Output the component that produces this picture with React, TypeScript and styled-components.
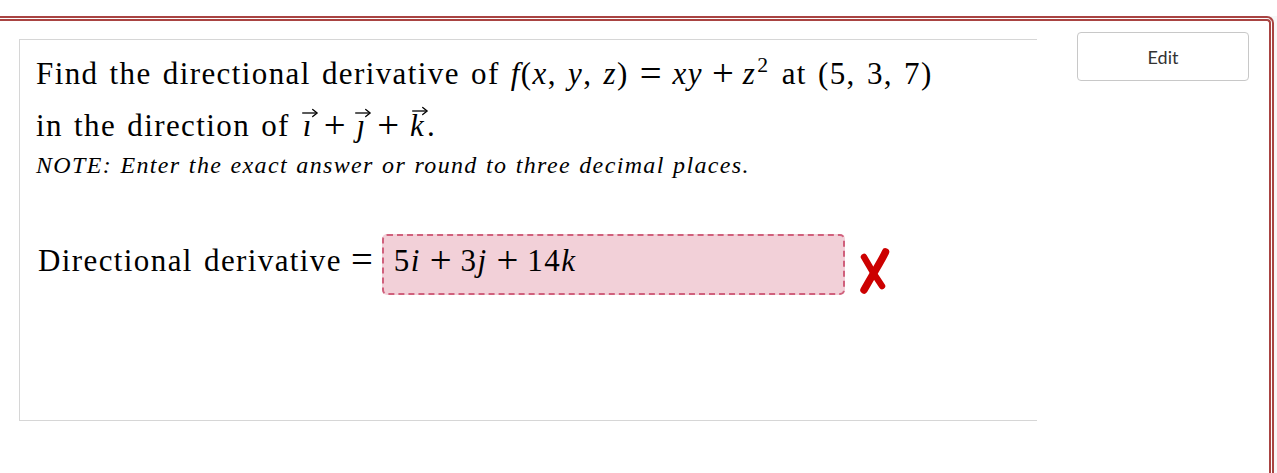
import React from "react";
import styled, { createGlobalStyle } from "styled-components";

const Global = createGlobalStyle`
  html, body { margin: 0; padding: 0; background: #ffffff; }
  body { font-family: "Liberation Serif", "Times New Roman", serif; color: #000; }
`;

const Page = styled.div`
  width: 1277px;
  height: 473px;
  overflow: hidden;
  background: #ffffff;
`;

const Shell = styled.div`
  margin-top: 16px;
  background: #f7f7f7;
`;

const Frame = styled.div`
  box-sizing: border-box;
  width: 1274px;
  min-height: 480px;
  background: #ffffff;
  border-top: 5px double #a94442;
  border-right: 5px double #a94442;
  border-top-right-radius: 7px;
  display: flex;
  align-items: flex-start;
  gap: 40px;
  padding: 11px 20px 0 19px;
`;

const Card = styled.div`
  box-sizing: border-box;
  width: 1018px;
  height: 382px;
  margin-top: 7px;
  border: 1px solid #d6d6d6;
  border-right: none;
  padding: 8px 0 0 16px;
`;

const Question = styled.p`
  margin: 0;
  font-size: 31px;
  line-height: 52px;
  letter-spacing: 1.4px;
  word-spacing: 2px;
  white-space: nowrap;
`;

const Note = styled.p`
  margin: 0;
  font-size: 24px;
  line-height: 26px;
  font-style: italic;
  letter-spacing: 1.35px;
  word-spacing: 1px;
  white-space: nowrap;
`;

const I = styled.span`
  font-style: italic;
`;

const Op = styled.span<{ $gap?: number }>`
  font-size: 1.25em;
  line-height: 0;
  letter-spacing: 0;
  vertical-align: -2px;
  margin: 0 ${(p) => p.$gap ?? 9}px;
`;

const Sup = styled.sup`
  font-size: 0.7em;
  line-height: 0;
  vertical-align: 0.55em;
  margin-left: 1px;
  margin-right: 1px;
`;

const VecBox = styled.span`
  position: relative;
  display: inline-block;
  font-style: italic;
  line-height: 31px;
  padding: 0 0.06em;
`;

const VecArrow = styled.svg<{ $top: number }>`
  position: absolute;
  left: 50%;
  top: ${(p) => p.$top}px;
  transform: translateX(-40%);
  width: 17px;
  height: 10px;
  overflow: visible;
`;

const Vec: React.FC<{ ch: string; top?: number }> = ({ ch, top = -3 }) => (
  <VecBox>
    {ch}
    <VecArrow $top={top} viewBox="0 0 17 10">
      <path d="M1 6 L15.5 6" stroke="#000" strokeWidth="1.3" fill="none" />
      <path d="M11.5 2.5 L16 6 L11.5 9.5" stroke="#000" strokeWidth="1.3" fill="none" strokeLinecap="round" strokeLinejoin="round" />
    </VecArrow>
  </VecBox>
);

const AnswerRow = styled.div`
  display: flex;
  align-items: flex-start;
  margin-top: 56px;
  margin-left: 2px;
  font-size: 31px;
  letter-spacing: 1.4px;
  word-spacing: 2px;
`;

const Label = styled.span`
  line-height: 32px;
  margin-top: 11px;
  white-space: nowrap;
`;

const Eq = styled.span`
  font-size: 1.25em;
  letter-spacing: 0;
  line-height: 32px;
  margin: 9px 9px 0 9px;
`;

const AnswerBox = styled.div`
  box-sizing: border-box;
  width: 463px;
  height: 61px;
  border: 2px dashed #d0607c;
  border-radius: 5px;
  background: #f2d0d8;
  padding: 9px 10px 0 10px;
  line-height: 32px;
  white-space: nowrap;
`;

const Mark = styled.svg`
  width: 32px;
  height: 46px;
  margin-left: 13px;
  margin-top: 14px;
`;

const EditButton = styled.button`
  box-sizing: border-box;
  width: 172px;
  height: 49px;
  border: 1px solid #c8c8c8;
  border-radius: 4px;
  background: #ffffff;
  font-family: Lato, "Liberation Sans", sans-serif;
  font-size: 18px;
  color: #333333;
  padding: 0;
  cursor: pointer;
`;

export default function App() {
  return (
    <Page>
      <Global />
      <Shell>
        <Frame>
          <Card>
            <Question>
              Find the directional derivative of <I>f</I>(<I>x</I>, <I>y</I>, <I>z</I>)
              <Op $gap={11}>=</Op>
              <I>xy</I>
              <Op>+</Op>
              <I>z</I>
              <Sup>2</Sup> at (5, 3, 7)
              <br />
              in the direction of <Vec ch="ı" />
              <Op>+</Op>
              <Vec ch="ȷ" />
              <Op>+</Op>
              <Vec ch="k" top={-5} />.
            </Question>
            <Note>NOTE: Enter the exact answer or round to three decimal places.</Note>
            <AnswerRow>
              <Label>Directional derivative</Label>
              <Eq>=</Eq>
              <AnswerBox>
                5<I>i</I>
                <Op>+</Op>3<I>j</I>
                <Op>+</Op>14<I>k</I>
              </AnswerBox>
              <Mark viewBox="0 0 32 46">
                <path
                  d="M27.5 4 C 24 12, 16 24, 6 42"
                  stroke="#cc0000"
                  strokeWidth="7.5"
                  strokeLinecap="round"
                  fill="none"
                />
                <path
                  d="M6 9 C 11 18, 17 28, 24 38"
                  stroke="#cc0000"
                  strokeWidth="6.5"
                  strokeLinecap="round"
                  fill="none"
                />
              </Mark>
            </AnswerRow>
          </Card>
          <EditButton>Edit</EditButton>
        </Frame>
      </Shell>
    </Page>
  );
}
